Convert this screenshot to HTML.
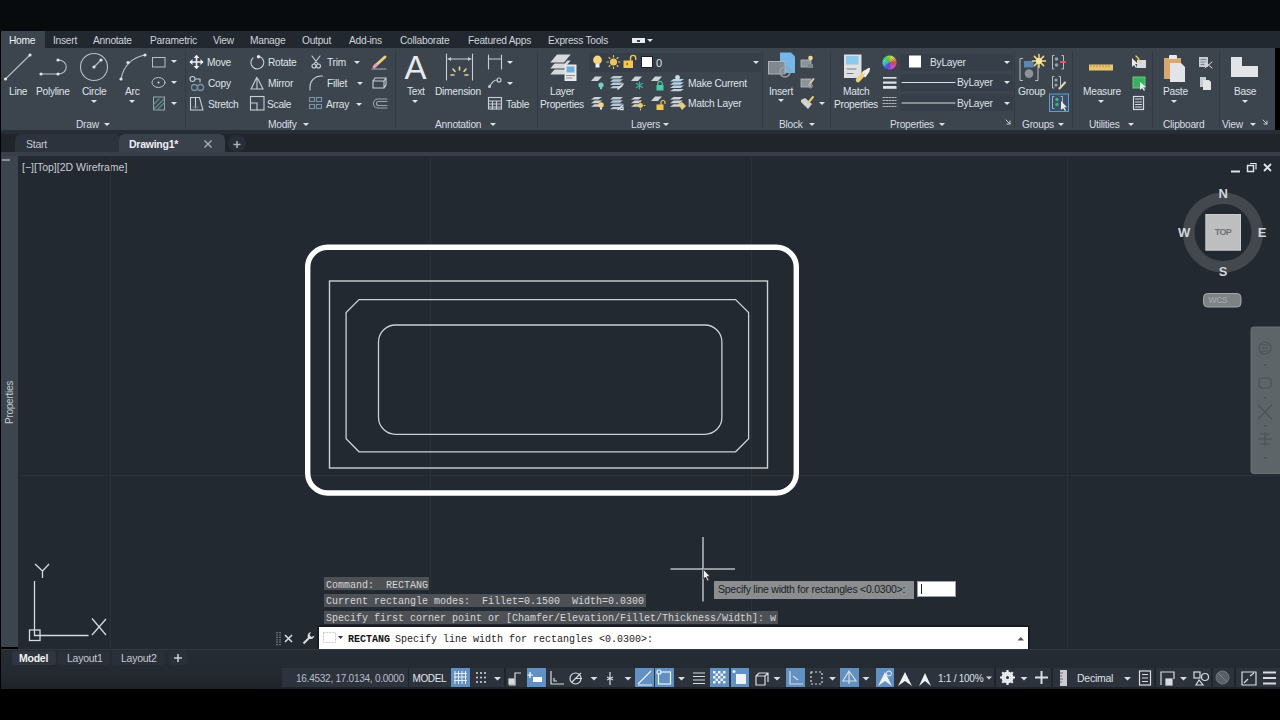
<!DOCTYPE html>
<html><head><meta charset="utf-8">
<style>
*{margin:0;padding:0;box-sizing:border-box}
html,body{width:1280px;height:720px;overflow:hidden;background:#000;font-family:"Liberation Sans",sans-serif;color:#e6e9ee;letter-spacing:-0.25px}
.a{position:absolute;white-space:nowrap}
#tabs{position:absolute;left:1px;top:31px;width:1279px;height:17px;background:#22282f}
.rt{position:absolute;top:0;height:18px;line-height:19.4px;font-size:10.2px;color:#cfd4db;white-space:nowrap}
#ribbon{position:absolute;left:1px;top:48px;width:1274px;height:82px;background:#3c454e}
.sep{position:absolute;top:51px;width:1px;height:77px;background:#323a47}
.pt{position:absolute;top:117.5px;font-size:10.2px;color:#d8dce2;line-height:14px;white-space:nowrap}
.lb{position:absolute;font-size:10.2px;color:#dfe3e8;line-height:12px;margin-top:-5.5px;white-space:nowrap}
.dd{font-size:8px;position:relative;top:-1px;margin-left:3px}
.dr{position:absolute;width:0;height:0;border-left:3px solid transparent;border-right:3px solid transparent;border-top:3px solid #dfe3e8}
#ftabs{position:absolute;left:1px;top:130px;width:1279px;height:25px;background:#20252c}
#vp{position:absolute;left:18px;top:156px;width:1262px;height:493px;background:#222931}
#bottom{position:absolute;left:1px;top:649px;width:1279px;height:40px;background:linear-gradient(#262c34,#242a31 55%,#1f2328)}
svg{position:absolute;left:0;top:0}
</style></head><body>
<div class="a" style="left:0;top:0;width:1280px;height:31px;background:#080b0d"></div>
<div id="tabs">
 <div class="rt" style="left:0;width:44px;height:17px;background:#3c454e"></div>
 <div class="rt" style="left:8px;color:#f0f2f5">Home</div>
 <div class="rt" style="left:52px">Insert</div>
 <div class="rt" style="left:92px">Annotate</div>
 <div class="rt" style="left:149px">Parametric</div>
 <div class="rt" style="left:212px">View</div>
 <div class="rt" style="left:249px">Manage</div>
 <div class="rt" style="left:301px">Output</div>
 <div class="rt" style="left:348px">Add-ins</div>
 <div class="rt" style="left:399px">Collaborate</div>
 <div class="rt" style="left:467px">Featured Apps</div>
 <div class="rt" style="left:547px">Express Tools</div>
 <div class="a" style="left:631px;top:7px;width:13px;height:5px;background:#e8eaee"></div>
 <div class="a" style="left:636px;top:9px;width:3px;height:2px;background:#444"></div>
 <div class="dr" style="left:646px;top:8px"></div>
</div>
<div id="ribbon"></div>
<div class="sep" style="left:185px"></div>
<div class="sep" style="left:395px"></div>
<div class="sep" style="left:537px"></div>
<div class="sep" style="left:762px"></div>
<div class="sep" style="left:830px"></div>
<div class="sep" style="left:1014px"></div>
<div class="sep" style="left:1072px"></div>
<div class="sep" style="left:1152px"></div>
<div class="sep" style="left:1219px"></div>
<div class="pt" style="left:76px">Draw</div><div class="dr" style="left:104px;top:123px"></div>
<div class="pt" style="left:268px">Modify</div><div class="dr" style="left:303px;top:123px"></div>
<div class="pt" style="left:435px">Annotation</div><div class="dr" style="left:490px;top:123px"></div>
<div class="pt" style="left:631px">Layers</div><div class="dr" style="left:663px;top:123px"></div>
<div class="pt" style="left:779px">Block</div><div class="dr" style="left:809px;top:123px"></div>
<div class="pt" style="left:890px">Properties</div><div class="dr" style="left:939px;top:123px"></div>
<div class="pt" style="left:1022px">Groups</div><div class="dr" style="left:1058px;top:123px"></div>
<div class="pt" style="left:1089px">Utilities</div><div class="dr" style="left:1128px;top:123px"></div>
<div class="pt" style="left:1163px">Clipboard</div>
<div class="pt" style="left:1222px">View</div><div class="dr" style="left:1250px;top:123px"></div>
<!-- labels -->
<div class="lb" style="left:9px;top:91px">Line</div>
<div class="lb" style="left:36px;top:91px">Polyline</div>
<div class="lb" style="left:82px;top:91px">Circle</div>
<div class="lb" style="left:125px;top:91px">Arc</div>
<div class="dr" style="left:91px;top:100px"></div>
<div class="dr" style="left:129px;top:100px"></div>
<div class="dr" style="left:171px;top:60px"></div>
<div class="dr" style="left:171px;top:81px"></div>
<div class="dr" style="left:171px;top:102px"></div>
<div class="lb" style="left:207px;top:62px">Move</div>
<div class="lb" style="left:268px;top:62px">Rotate</div>
<div class="lb" style="left:327px;top:62px">Trim</div>
<div class="lb" style="left:208px;top:83px">Copy</div>
<div class="lb" style="left:268px;top:83px">Mirror</div>
<div class="lb" style="left:327px;top:83px">Fillet</div>
<div class="lb" style="left:208px;top:104px">Stretch</div>
<div class="lb" style="left:267px;top:104px">Scale</div>
<div class="lb" style="left:326px;top:104px">Array</div>
<div class="dr" style="left:354px;top:61px"></div>
<div class="dr" style="left:357px;top:82px"></div>
<div class="dr" style="left:356px;top:103px"></div>
<div class="lb" style="left:407px;top:91px">Text</div>
<div class="dr" style="left:412px;top:100px"></div>
<div class="lb" style="left:435px;top:91px">Dimension</div>
<div class="dr" style="left:507px;top:61px"></div>
<div class="dr" style="left:507px;top:82px"></div>
<div class="lb" style="left:506px;top:104px">Table</div>
<div class="lb" style="left:550px;top:91px">Layer</div>
<div class="lb" style="left:540px;top:104px">Properties</div>
<div class="a" style="left:589px;top:53px;width:172px;height:19px;background:#363e49"></div>
<div class="lb" style="left:656px;top:62px;font-size:11px">0</div>
<div class="dr" style="left:753px;top:61px"></div>
<div class="lb" style="left:688px;top:83px">Make Current</div>
<div class="lb" style="left:688px;top:103px">Match Layer</div>
<div class="lb" style="left:769px;top:91px">Insert</div>
<div class="dr" style="left:778px;top:99px"></div>
<div class="dr" style="left:819px;top:102px"></div>
<div class="lb" style="left:843px;top:91px">Match</div>
<div class="lb" style="left:834px;top:104px">Properties</div>
<div class="a" style="left:900px;top:54px;width:113px;height:17px;background:#363e49"></div>
<div class="a" style="left:900px;top:74px;width:113px;height:17px;background:#363e49"></div>
<div class="a" style="left:900px;top:94px;width:113px;height:17px;background:#363e49"></div>
<div class="lb" style="left:930px;top:62px">ByLayer</div>
<div class="lb" style="left:957px;top:82px">ByLayer</div>
<div class="lb" style="left:957px;top:103px">ByLayer</div>
<div class="dr" style="left:1004px;top:61px"></div>
<div class="dr" style="left:1004px;top:81px"></div>
<div class="dr" style="left:1004px;top:102px"></div>
<div class="lb" style="left:1018px;top:91px">Group</div>
<div class="lb" style="left:1083px;top:91px">Measure</div>
<div class="dr" style="left:1098px;top:100px"></div>
<div class="lb" style="left:1163px;top:91px">Paste</div>
<div class="dr" style="left:1171px;top:100px"></div>
<div class="lb" style="left:1234px;top:91px">Base</div>
<div class="dr" style="left:1242px;top:100px"></div>
<div id="ftabs"></div>
<div class="a" style="left:1px;top:130px;width:1279px;height:4px;background:#272d35"></div>
<div class="a" style="left:15px;top:134px;width:107px;height:18px;background:#2d333c;border-radius:7px 7px 0 0"></div>
<div class="a" style="left:119px;top:134px;width:106px;height:19px;background:#39414d;border-radius:6px 6px 0 0"></div>
<div class="a" style="left:228px;top:135px;width:18px;height:17px;background:#272e37;border-radius:9px"></div>
<div class="a" style="left:1px;top:152px;width:1279px;height:4px;background:#383f49"></div>
<div class="a" style="left:26px;top:138px;font-size:10.5px;line-height:12px;color:#c4c9d0">Start</div>
<div class="a" style="left:129px;top:138px;font-size:10.5px;line-height:12px;color:#eef0f3;font-weight:bold">Drawing1*</div>
<svg width="1280" height="720" viewBox="0 0 1280 720" fill="none">
 <path d="M204.5 140.5 L211.5 147.5 M211.5 140.5 L204.5 147.5" stroke="#a9aeb5" stroke-width="1.4"/>
 <path d="M237 141 V148 M233.5 144.5 H240.5" stroke="#aeb4bb" stroke-width="1.5"/>
</svg>
<div id="vp"></div>
<div class="a" style="left:1px;top:156px;width:17px;height:491px;background:#3c454e"></div>
<div class="a" style="left:2px;top:159px;width:8px;height:2px;background:#8a919a"></div>
<div class="a" style="left:-17px;top:396px;width:52px;height:13px;transform:rotate(-90deg);font-size:10px;line-height:13px;color:#c4c9d0;text-align:center">Properties</div>
<div class="a" style="left:22px;top:161px;font-size:10.5px;line-height:12px;color:#c9ced4;letter-spacing:0">[−][Top][2D Wireframe]</div>
<svg width="1280" height="720" viewBox="0 0 1280 720" fill="none">
 <!-- faint grid -->
 <g stroke="#2a3139" stroke-width="1">
  <path d="M110.5 157 V648 M430.5 157 V648 M751.5 157 V648 M1067.5 157 V648 M19 475.5 H1280"/>
 </g>
 <!-- drawing -->
 <rect x="307.7" y="247.2" width="488.6" height="245.8" rx="20" stroke="#ffffff" stroke-width="5.4"/>
 <rect x="329.5" y="281" width="438" height="187" stroke="#cdd0d4" stroke-width="1.4"/>
 <path d="M359 299.6 H735.6 L748.6 312.6 V438.8 L735.6 451.8 H359 L346.1 438.8 V312.6 Z" stroke="#cdd0d4" stroke-width="1.3"/>
 <rect x="378.5" y="325" width="343.4" height="109.3" rx="17" stroke="#cdd0d4" stroke-width="1.3"/>
 <!-- UCS -->
 <g stroke="#d6d9dd" stroke-width="1.3">
  <path d="M34.5 581 V635.5 H88.5"/>
  <rect x="29.5" y="630" width="10.5" height="10.5"/>
  <path d="M35 564 L42.5 571 L49 564 M42.5 571 V578"/>
  <path d="M92 618.5 L106 635 M106 619 L92 635"/>
 </g>
 <!-- crosshair -->
 <path d="M703 537 V601.5 M670.5 569 H735" stroke="#b9bdc2" stroke-width="1.5"/>
 <path d="M703.5 569.5 V579 L705.5 577 L707.5 581 L709 580.2 L707 576.5 H710 Z" fill="#f0f0f0" stroke="#222" stroke-width="0.6"/>
 <!-- viewcube -->
 <circle cx="1223" cy="232.5" r="34.3" stroke="#42484e" stroke-width="11.5"/>
 <rect x="1205.5" y="214" width="35.5" height="36.5" fill="#bdbebf"/>
 <rect x="1206" y="214.5" width="34.5" height="35.5" fill="none" stroke="#cacbcc" stroke-width="1"/>
 <!-- window controls -->
 <path d="M1231 171.5 H1240" stroke="#e0e3e7" stroke-width="2"/>
 <rect x="1247.5" y="165.5" width="6" height="6" stroke="#e0e3e7" stroke-width="1.5"/>
 <path d="M1250 163.5 H1256 V169.5" stroke="#e0e3e7" stroke-width="1.2"/>
 <path d="M1264 164 L1271 171 M1271 164 L1264 171" stroke="#e0e3e7" stroke-width="1.8"/>
 <!-- WCS -->
 <rect x="1203.5" y="293.5" width="37.5" height="13.5" rx="4" fill="#7d8286" stroke="#a2a6aa" stroke-width="1"/>
 <!-- navbar -->
 <rect x="1251" y="327" width="31" height="146.5" rx="2.5" fill="#5e6569" stroke="#6a7175" stroke-width="1"/>
 <g stroke="#4b5256" stroke-width="1.2">
  <circle cx="1265" cy="348" r="6"/>
  <path d="M1262 345 H1268 M1262 348 H1268 M1262 351 H1268"/>
  <rect x="1259" y="378" width="12" height="10" rx="3"/>
  <path d="M1258 405 L1272 419 M1272 405 L1258 419"/>
  <path d="M1258 439 H1272 M1265 432 V446 M1260 434 H1270 M1260 444 H1270"/>
 </g>
 <path d="M1263 364 h4 l-2 2z M1263 397 h4 l-2 2z M1263 425 h4 l-2 2z M1263 457 h4 l-2 2z" fill="#4b5256"/>
</svg>
<div class="a" style="left:1205px;top:226px;width:36px;text-align:center;font-size:9px;line-height:12px;color:#717477;font-weight:bold;letter-spacing:-0.6px">TOP</div>
<div class="a" style="left:1215px;top:186px;width:16px;text-align:center;font-size:13px;line-height:15px;color:#d2d5d9;font-weight:bold">N</div>
<div class="a" style="left:1215px;top:264px;width:16px;text-align:center;font-size:13px;line-height:15px;color:#d2d5d9;font-weight:bold">S</div>
<div class="a" style="left:1175px;top:225px;width:18px;text-align:center;font-size:13px;line-height:15px;color:#d2d5d9;font-weight:bold">W</div>
<div class="a" style="left:1254px;top:225px;width:16px;text-align:center;font-size:13px;line-height:15px;color:#d2d5d9;font-weight:bold">E</div>
<div class="a" style="left:1203px;top:295px;width:30px;text-align:center;font-size:8.5px;line-height:10px;color:#a9adb1">WCS</div>
<!-- command history -->
<div class="a" style="left:324px;top:577px;width:105px;height:13px;background:#4d5156"></div>
<div class="a" style="left:324px;top:594px;width:322px;height:13px;background:#4d5156"></div>
<div class="a" style="left:324px;top:610.5px;width:454px;height:13.5px;background:#4d5156"></div>
<div class="a" style="left:326px;top:578.5px;font-family:'Liberation Mono',monospace;letter-spacing:0;font-size:10px;line-height:13px;color:#d4d6d8;white-space:pre">Command:  RECTANG</div>
<div class="a" style="left:326px;top:595px;font-family:'Liberation Mono',monospace;letter-spacing:0;font-size:10px;line-height:13px;color:#d4d6d8;white-space:pre">Current rectangle modes:  Fillet=0.1500  Width=0.0300</div>
<div class="a" style="left:326px;top:612px;font-family:'Liberation Mono',monospace;letter-spacing:0;font-size:10px;line-height:13px;color:#d4d6d8;white-space:pre">Specify first corner point or [Chamfer/Elevation/Fillet/Thickness/Width]: w</div>
<!-- command input -->
<div class="a" style="left:319px;top:627px;width:709px;height:22px;background:#ffffff;box-shadow:0 0 0 1.5px #15191e"></div>
<div class="a" style="left:348px;top:632.7px;font-family:'Liberation Mono',monospace;letter-spacing:0;font-size:10px;line-height:13px;color:#111;font-weight:bold;white-space:pre">RECTANG</div>
<div class="a" style="left:395px;top:632.7px;font-family:'Liberation Mono',monospace;letter-spacing:0;font-size:10px;line-height:13px;color:#222;white-space:pre">Specify line width for rectangles &lt;0.0300&gt;:</div>
<svg width="1280" height="720" viewBox="0 0 1280 720" fill="none">
 <path d="M277 632 V646 M280 632 V646" stroke="#9aa0a8" stroke-width="1.2" stroke-dasharray="1.2 1.2"/>
 <path d="M285 635 L292 642 M292 635 L285 642" stroke="#d8dce0" stroke-width="1.6"/>
 <path d="M303.5 643.5 L310 637" stroke="#d8dce0" stroke-width="2"/><path d="M308.5 638.5 A4 4 0 0 1 311 632 L309.5 635 L311.5 637 L314.5 635.5 A4 4 0 0 1 308.5 638.5Z" fill="#d8dce0"/>
 <rect x="323.5" y="632.5" width="12" height="10" stroke="#c8ccd0" stroke-width="1" stroke-dasharray="2 1"/>
 <path d="M338 636 h5 l-2.5 3z" fill="#333"/>
 <path d="M1017.5 640.5 h6.5 l-3.25 -3.5z" fill="#505050"/>
</svg>
<!-- tooltip -->
<div class="a" style="left:714px;top:580.5px;width:200px;height:18px;background:#8b8e91"></div>
<div class="a" style="left:718px;top:583px;font-size:10.5px;line-height:12px;color:#1c1f22">Specify line width for rectangles &lt;0.0300&gt;:</div>
<div class="a" style="left:917px;top:580.5px;width:39px;height:16.5px;background:#fff;border:1px solid #9aa0a6"></div>
<div class="a" style="left:921px;top:584px;width:1px;height:10px;background:#222"></div>
<div id="bottom"></div>
<div class="a" style="left:1px;top:649px;width:1279px;height:1px;background:#323943"></div>
<div class="a" style="left:12px;top:651px;width:44px;height:14px;background:#2f3640;border-radius:3px"></div>
<div class="a" style="left:58px;top:651px;width:52px;height:14px;background:#2a3039;border-radius:3px"></div>
<div class="a" style="left:112px;top:651px;width:53px;height:14px;background:#2a3039;border-radius:3px"></div>
<div class="a" style="left:169px;top:651px;width:18px;height:14px;background:#2a3039;border-radius:3px"></div>
<div class="a" style="left:19px;top:652px;font-size:10.5px;line-height:12px;color:#f0f2f4;font-weight:bold">Model</div>
<div class="a" style="left:67px;top:652px;font-size:10.5px;line-height:12px;color:#c4c9d0">Layout1</div>
<div class="a" style="left:121px;top:652px;font-size:10.5px;line-height:12px;color:#c4c9d0">Layout2</div>
<!-- status bar items bg -->
<div class="a" style="left:282px;top:668px;width:998px;height:19px;background:#2c333d"></div>
<div class="a" style="left:296px;top:672.5px;font-size:10px;line-height:12px;color:#b9bec5">16.4532, 17.0134, 0.0000</div>
<div class="a" style="left:412.5px;top:672.5px;font-size:10px;letter-spacing:-0.4px;line-height:12px;color:#e4e7eb">MODEL</div>
<div class="a" style="left:938px;top:672.5px;font-size:10px;line-height:12px;color:#dde0e4">1:1 / 100%</div>
<div class="a" style="left:1077px;top:672px;font-size:10.5px;line-height:12px;color:#dde0e4">Decimal</div>
<svg width="1280" height="720" viewBox="0 0 1280 720" fill="none">
 <!-- dividers -->
 <g fill="#1f252d">
  <rect x="408" y="668" width="1" height="19"/><rect x="504" y="668" width="2" height="19"/>
  <rect x="994" y="668" width="2" height="19"/><rect x="1051" y="668" width="2" height="19"/>
  <rect x="1154" y="668" width="2" height="19"/><rect x="1211" y="668" width="2" height="19"/>
  <rect x="1234" y="668" width="2" height="19"/>
 </g>
 <!-- blue buttons -->
 <g fill="#6191c2">
  <rect x="451" y="668" width="19" height="19"/>
  <rect x="527" y="668" width="19" height="19"/>
  <rect x="635" y="668" width="19" height="19"/>
  <rect x="655" y="668" width="19" height="19"/>
  <rect x="710" y="668" width="19" height="19"/>
  <rect x="731" y="668" width="18" height="19"/>
  <rect x="786" y="668" width="19" height="19"/>
  <rect x="840" y="668" width="19" height="19"/>
  <rect x="876" y="668" width="18" height="19"/>
 </g>
 <g stroke="#e8ecf0" stroke-width="1">
  <!-- grid -->
  <path d="M455 671 V684 M458.5 671 V684 M462 671 V684 M465.5 671 V684 M454 673.5 H467 M454 677 H467 M454 680.5 H467"/>
 </g>
 <g fill="#d8dce0">
  <!-- snap dots -->
  <circle cx="477" cy="673" r="1"/><circle cx="481" cy="673" r="1"/><circle cx="485" cy="673" r="1"/>
  <circle cx="477" cy="677.5" r="1"/><circle cx="481" cy="677.5" r="1"/><circle cx="485" cy="677.5" r="1"/>
  <circle cx="477" cy="682" r="1"/><circle cx="481" cy="682" r="1"/><circle cx="485" cy="682" r="1"/>
  <!-- arrows -->
  <path d="M494 677 h7 l-3.5 3.5z M590.5 677 h7 l-3.5 3.5z M624.5 677 h7 l-3.5 3.5z M678 677 h7 l-3.5 3.5z M773.5 677 h7 l-3.5 3.5z M829 677 h7 l-3.5 3.5z M862.5 677 h7 l-3.5 3.5z M986 676.5 h6 l-3 3z M1020.5 677 h7 l-3.5 3.5z M1124 677 h7 l-3.5 3.5z M1180 677 h7 l-3.5 3.5z"/>
 </g>
 <g stroke="#d8dce0" stroke-width="1.2">
  <path d="M509 685 H515 V673 H521"/>
  <rect x="509" y="679" width="5" height="5" fill="#d8dce0"/>
  <path d="M530 672 V678 M527.5 675 H533" stroke="#fff"/>
  <rect x="533" y="677" width="9" height="5" fill="#fff" stroke="none"/>
  <path d="M551 671 V684 H564 M554 678 V681 H557"/>
  <circle cx="575.5" cy="678.5" r="5.5"/>
  <path d="M572 682 L581 673 M575 678.5 H582"/>
  <path d="M610 672 V685 M607 677 L613 680 M607 680 L613 677"/>
  <path d="M638 684 L651 671 M638 685 H652" stroke="#eef2f5"/>
  <rect x="658.5" y="672" width="12" height="12" stroke="#eef2f5"/>
  <circle cx="659" cy="672" r="2" fill="#6191c2" stroke="#eef2f5"/>
  <path d="M693 673 H705 M693 676.5 H705 M693 680 H705 M693 683.5 H705"/>
  <path d="M756 676 H765 V685 H756 Z M759 673 H768 V682 M756 676 L759 673 M765 676 L768 673"/>
  <path d="M790 671 V684 H803 M793 676 L798 680"/>
  <rect x="811" y="672" width="11" height="12" stroke-dasharray="2 2"/>
  <path d="M849 671 L843 681 H856 Z M849 671 V684"/>
  <path d="M1035 677.5 H1048 M1041.5 671 V684" stroke-width="2"/>
  <rect x="1139.5" y="671" width="11" height="14"/>
  <path d="M1142 674.5 H1148 M1142 678 H1148 M1142 681.5 H1148"/>
  <path d="M1161 685 V672 H1174 V679"/>
  <rect x="1166" y="679" width="6" height="6" fill="#d8dce0"/>
  <rect x="1194" y="672" width="6" height="6"/>
  <circle cx="1205" cy="677" r="3.5"/>
  <path d="M1199 680 L1196 685 H1203 Z"/>
  <path d="M1242 672 H1256 V685 H1242 Z M1244 683 L1248 679 M1250 676 L1254 673"/>
  <path d="M1263 672.5 H1276 M1263 678 H1276 M1263 683.5 H1276" stroke-width="1.8"/>
 </g>
 <g fill="#eef2f5">
  <path d="M878 686 L885 672 L892 686 L885 681 Z"/>
  <path d="M898 686 L905 672 L912 686 L905 681 Z"/>
  <path d="M919 686 L925 673 L931 686 L925 681 Z"/>
 </g>
 <circle cx="889" cy="673.5" r="2.5" stroke="#eef2f5" stroke-width="1"/>
 <!-- gear -->
 <circle cx="1007.5" cy="677.5" r="4.5" stroke="#e8ecf0" stroke-width="3"/>
 <path d="M1007.5 670 V685 M1000 677.5 H1015 M1002.2 672.2 L1012.8 682.8 M1012.8 672.2 L1002.2 682.8" stroke="#e8ecf0" stroke-width="2.2"/>
 <circle cx="1007.5" cy="677.5" r="1.5" fill="#2c333d"/>
 <rect x="1060" y="670" width="7" height="16" fill="#c8ccd0"/>
 <path d="M1060 673 h3 M1060 676 h2 M1060 679 h3 M1060 682 h2" stroke="#555" stroke-width="0.8"/>
 <circle cx="1222.5" cy="677.5" r="6.5" fill="#5a6068" stroke="#6e747c" stroke-width="1"/>
 <path d="M1218 673 L1227 682" stroke="#7a8088" stroke-width="1"/>
 <g><rect x="713.0" y="671.0" width="2.5" height="2.5" fill="#f0f3f6"/><rect x="713.0" y="676.0" width="2.5" height="2.5" fill="#f0f3f6"/><rect x="713.0" y="681.0" width="2.5" height="2.5" fill="#f0f3f6"/><rect x="715.5" y="673.5" width="2.5" height="2.5" fill="#f0f3f6"/><rect x="715.5" y="678.5" width="2.5" height="2.5" fill="#f0f3f6"/><rect x="718.0" y="671.0" width="2.5" height="2.5" fill="#f0f3f6"/><rect x="718.0" y="676.0" width="2.5" height="2.5" fill="#f0f3f6"/><rect x="718.0" y="681.0" width="2.5" height="2.5" fill="#f0f3f6"/><rect x="720.5" y="673.5" width="2.5" height="2.5" fill="#f0f3f6"/><rect x="720.5" y="678.5" width="2.5" height="2.5" fill="#f0f3f6"/><rect x="723.0" y="671.0" width="2.5" height="2.5" fill="#f0f3f6"/><rect x="723.0" y="676.0" width="2.5" height="2.5" fill="#f0f3f6"/><rect x="723.0" y="681.0" width="2.5" height="2.5" fill="#f0f3f6"/></g>
 <rect x="736" y="674" width="10" height="10" fill="#f0f3f6"/>
 <circle cx="734" cy="671.5" r="1.5" fill="#f0f3f6"/>
 <path d="M1090 0"/>
 <path d="M178 654 V662 M174 658 H182" stroke="#c8cdd3" stroke-width="1.6"/>
</svg>
<svg width="1280" height="720" viewBox="0 0 1280 720" fill="none" stroke-linecap="round">
<g stroke="#b9bec4" stroke-width="1.1">
 <!-- Draw -->
 <line x1="5.5" y1="79" x2="30" y2="55"/>
 <path d="M41 74 H58 C69 74 69 60 58 60"/>
 <circle cx="94" cy="67" r="13.5"/>
 <line x1="94" y1="67" x2="101" y2="60"/>
 <path d="M121 79 Q125 59 145 55"/>
 <rect x="152.5" y="57.5" width="12.5" height="9.5" stroke-width="1"/>
 <ellipse cx="158.5" cy="82.5" rx="6.5" ry="5" stroke-width="1"/>
 <rect x="153.5" y="97" width="11" height="13" stroke-width="1" stroke="#9aa6ae"/>
</g>
<g fill="#dfe3e8">
 <circle cx="5.5" cy="79" r="1.6"/><circle cx="30" cy="55" r="1.6"/>
 <circle cx="41" cy="74" r="1.6"/><circle cx="58" cy="74" r="1.6"/><circle cx="58" cy="60" r="1.6"/>
 <circle cx="94" cy="67" r="1.6"/><circle cx="101" cy="60" r="1.6"/>
 <circle cx="121" cy="79" r="1.6"/><circle cx="128" cy="62.5" r="1.6"/><circle cx="145" cy="55" r="1.6"/>
 <circle cx="158.5" cy="82.5" r="1"/>
</g>
<path d="M154 109 L164 99 M154 104 L159 99 M158 109 L164 103" stroke="#5f8f8c" stroke-width="1.2"/>
<!-- Modify -->
<g stroke="#eef0f3" stroke-width="1.6" stroke-linecap="butt">
 <path d="M190 62 H203 M196.5 55.5 V68.5"/>
</g>
<g fill="#eef0f3">
 <path d="M189.5 62 L192.5 59 V65Z M203.5 62 L200.5 59 V65Z M196.5 55 L193.5 58 H199.5Z M196.5 69 L193.5 66 H199.5Z"/>
</g>
<g stroke="#c9cdd3" stroke-width="1.1">
 <circle cx="192.5" cy="79" r="2.5"/>
 <path d="M195.5 79 H200 V82"/>
</g>
<g stroke="#7890a4" stroke-width="1.3">
 <circle cx="194.5" cy="87.5" r="3"/><circle cx="200.5" cy="87.5" r="3"/>
</g>
<g stroke="#c9cdd3" stroke-width="1.1">
 <path d="M190.5 97.5 H199.5 L203 110 H190.5 Z M195.5 97.5 V108"/>
 <path d="M193 107 H198" stroke="#6d8499"/>
 <!-- rotate -->
 <path d="M253 57.8 A6.4 6.4 0 1 0 259.5 56.5"/><circle cx="258.5" cy="56.8" r="1.7" fill="#e6e9ec" stroke="none"/>
 <!-- mirror -->
 <path d="M257 77 L251 89 H257 Z M258 79 L263 89 H258"/>
 <!-- fillet -->
 <path d="M310 90 V87 A11 11 0 0 1 321 76 H322.5"/>
 <!-- scale -->
 <rect x="250.5" y="96.5" width="13.5" height="13.5"/>
 <path d="M250.5 103 H257 V110"/>
 <!-- box -->
 <path d="M373 81 V88 H384 V81 Z M373 81 L375 78 H386 V85 L384 88 M384 81 L386 78"/>
 <!-- offset -->
 <path d="M387 99 H378 A4.5 4.5 0 0 0 378 108 H387 M387 101.5 H378.5 A2 2 0 0 0 378.5 105.5 H387" stroke="#9aa6ae"/>
</g>
<g stroke="#c9cdd3" stroke-width="1.1">
 <path d="M312 56 L318 64 M320 56 L314 64"/>
 <circle cx="314" cy="66" r="2"/><circle cx="318.5" cy="66" r="2"/>
</g>
<g stroke="#7c93a6" stroke-width="1.1">
 <rect x="309.5" y="97.5" width="5" height="4"/><rect x="316.5" y="97.5" width="5" height="4"/>
 <rect x="309.5" y="104.5" width="5" height="4"/><rect x="316.5" y="104.5" width="5" height="4"/>
</g>
<path d="M375 66 L385 57" stroke="#e9cf7c" stroke-width="3"/>
<path d="M374 67 L376 65" stroke="#e0a0b0" stroke-width="3"/>
<path d="M372 69 H386" stroke="#c9cdd3" stroke-width="0.8"/>
<!-- Annotation -->
<text x="415.5" y="79" font-family="Liberation Sans" font-size="33" fill="#e8eaee" text-anchor="middle">A</text>
<g stroke="#c9cdd3" stroke-width="1.1">
 <path d="M446.5 54 V80 M472.5 54 V80 M448 59 H471"/>
 <path d="M488.5 55 V69 M501.5 55 V69 M489 59 H501"/>
 <path d="M490 86 Q493 80 497 80"/>
 <circle cx="499" cy="80" r="2"/>
 <rect x="488.5" y="97.5" width="13" height="11.5"/>
 <path d="M488.5 101 H501.5 M488.5 104 H501.5 M488.5 107 H501.5 M492.5 101 V109 M496.5 101 V109"/>
</g>
<g fill="#c9cdd3"><path d="M448 59 l3 -2 v4z M471 59 l-3 -2 v4z"/><circle cx="489.5" cy="86.5" r="1.5"/></g>
<g stroke="#e8d38a" stroke-width="1.6">
 <path d="M459.5 67 V70 M453 69 L455 71.5 M466 69 L464 71.5 M451 75 H454 M465 75 H468"/>
</g>
<!-- Layers -->
<path d="M549 75 L556.5 66 H572 L564.5 75Z" fill="#d5d8dc" stroke="#3c454e" stroke-width="1.2"/>
<path d="M549 69 L556.5 60 H572 L564.5 69Z" fill="#d5d8dc" stroke="#3c454e" stroke-width="1.2"/>
<path d="M549 63 L556.5 54 H572 L564.5 63Z" fill="#d5d8dc" stroke="#3c454e" stroke-width="1.2"/>
<rect x="564.5" y="64.5" width="12" height="16.5" fill="#e6e8eb"/>
<rect x="566.5" y="66.5" width="8" height="6" fill="#6aaee0"/>
<path d="M566.5 75.5 H574.5 M566.5 78 H572" stroke="#8a7070" stroke-width="0.8"/>
<circle cx="597.5" cy="60" r="4.4" fill="#f2d680"/><rect x="595.5" y="64" width="4" height="3.5" fill="#eceef0"/>
<circle cx="613.5" cy="62" r="3.6" fill="#eec460"/>
<g stroke="#e8c460" stroke-width="1.1"><path d="M613.5 55.5 V57 M613.5 67 V68.5 M607 62 H608.5 M618.5 62 H620 M609 57.5 L610 58.5 M617 65.5 L618 66.5 M618 57.5 L617 58.5 M610 65.5 L609 66.5"/></g>
<rect x="623.5" y="60.5" width="9.5" height="7.5" fill="#f0c850"/>
<path d="M630.5 60.5 V58 A2.6 2.6 0 0 1 635.7 58 V59.5" stroke="#f0c850" stroke-width="1.4" fill="none"/>
<rect x="626.5" y="63" width="1.5" height="2" fill="#8a6a20"/>
<rect x="641.5" y="56.5" width="11" height="11" fill="#fff" stroke="#1d2126" stroke-width="1"/>
<path d="M591 81.0 L595 76.5 H602 L598 81.0Z" fill="#cfd3d7"/>
<circle cx="601" cy="85" r="2.6" fill="#6fd0c8"/><rect x="600" y="87" width="2" height="2.2" fill="#6fd0c8"/>
<path d="M610 88.30000000000001 L613 85.9 H623 L620 88.30000000000001Z" fill="#b9c9d6"/><path d="M610 85.0 L613 82.6 H623 L620 85.0Z" fill="#b9c9d6"/><path d="M610 81.7 L613 79.3 H623 L620 81.7Z" fill="#b9c9d6"/><path d="M610 78.4 L613 76.0 H623 L620 78.4Z" fill="#b9c9d6"/>
<path d="M618 89 L623 84" stroke="#d8e4ee" stroke-width="1.6"/>
<path d="M631 81.0 L635 76.5 H642 L638 81.0Z" fill="#cfd3d7"/>
<path d="M639.5 82 V89 M636.5 83.5 L642.5 87.5 M642.5 83.5 L636.5 87.5" stroke="#3fb0a0" stroke-width="1.2"/>
<path d="M651 81.0 L655 76.5 H662 L658 81.0Z" fill="#cfd3d7"/>
<rect x="656.5" y="85" width="7" height="5.5" fill="#50c8a8"/><path d="M657.8 85 V83.5 A2.2 2.2 0 0 1 662.2 83.5 V85" stroke="#50c8a8" stroke-width="1.2" fill="none"/>
<path d="M670 91.30000000000001 L673.5 88.9 H684 L680.5 91.30000000000001Z" fill="#bcd2e2"/><path d="M670 88.0 L673.5 85.6 H684 L680.5 88.0Z" fill="#bcd2e2"/><path d="M670 84.7 L673.5 82.3 H684 L680.5 84.7Z" fill="#bcd2e2"/><path d="M670 81.4 L673.5 79.0 H684 L680.5 81.4Z" fill="#bcd2e2"/>
<circle cx="677.5" cy="77.5" r="2.4" fill="#c8dcec"/>
<path d="M591 106.8 L594.5 104.2 H602 L598.5 106.8Z" fill="#cfd3d7"/><path d="M591 103.19999999999999 L594.5 100.6 H602 L598.5 103.19999999999999Z" fill="#cfd3d7"/><path d="M591 99.6 L594.5 97.0 H602 L598.5 99.6Z" fill="#cfd3d7"/>
<circle cx="601" cy="105" r="2.7" fill="#f2d680"/><rect x="600" y="107.5" width="2" height="2" fill="#eceef0"/>
<path d="M610 109.30000000000001 L613 106.9 H623 L620 109.30000000000001Z" fill="#b9c9d6"/><path d="M610 106.0 L613 103.6 H623 L620 106.0Z" fill="#b9c9d6"/><path d="M610 102.7 L613 100.3 H623 L620 102.7Z" fill="#b9c9d6"/><path d="M610 99.4 L613 97.0 H623 L620 99.4Z" fill="#b9c9d6"/>
<path d="M618 109.5 L623 105 M620.5 109.5 H623 V107" stroke="#d8e4ee" stroke-width="1.3" fill="none"/>
<path d="M631 106.8 L634.5 104.2 H642 L638.5 106.8Z" fill="#cfd3d7"/><path d="M631 103.19999999999999 L634.5 100.6 H642 L638.5 103.19999999999999Z" fill="#cfd3d7"/><path d="M631 99.6 L634.5 97.0 H642 L638.5 99.6Z" fill="#cfd3d7"/>
<circle cx="640.5" cy="105.5" r="2.4" fill="#e8d070"/><path d="M640.5 101 V102 M640.5 109 V110 M636 105.5 H637 M644 105.5 H645" stroke="#e8d070" stroke-width="1"/>
<path d="M651 101.0 L655 96.5 H662 L658 101.0Z" fill="#cfd3d7"/>
<rect x="656.5" y="104.5" width="7" height="5.5" fill="#f0c850"/><path d="M661 104.5 V102.5 A2 2 0 0 1 665 102.5 V103.5" stroke="#f0c850" stroke-width="1.2" fill="none"/>
<path d="M670 106.8 L673.5 104.2 H683 L679.5 106.8Z" fill="#cfd3d7"/><path d="M670 103.19999999999999 L673.5 100.6 H683 L679.5 103.19999999999999Z" fill="#cfd3d7"/><path d="M670 99.6 L673.5 97.0 H683 L679.5 99.6Z" fill="#cfd3d7"/>
<path d="M678 104 L682 102 L686 106 L682 110 Z" fill="#e8cc80"/>

<!-- Block -->
<path d="M780 52.5 H791 L795 56.5 V73 H780Z" fill="#74b8ea"/>
<rect x="768.5" y="61.5" width="16.5" height="12.5" fill="#858b93" stroke="#b4b9be" stroke-width="1" opacity="0.95"/>
<circle cx="785" cy="72" r="5" fill="none" stroke="#9aa0a7" stroke-width="1.6"/>
<rect x="801" y="60" width="10" height="7" fill="#8d939a" stroke="#b8bdc2" stroke-width="0.8"/><circle cx="810.5" cy="58" r="2.3" fill="#f0dc90"/><rect x="808" y="64" width="5" height="4" fill="#7f868d"/>
<rect x="801" y="79" width="10" height="8" fill="#8d939a" stroke="#b8bdc2" stroke-width="0.8"/><path d="M809 85 L813.5 79" stroke="#e0c8a0" stroke-width="2"/><circle cx="810.5" cy="86" r="2" fill="none" stroke="#8a9aa0" stroke-width="1"/>
<path d="M801 100 L805 98 L812 104 L808 109 L801 102Z" fill="#d0d3d6"/><path d="M808 103 L813 97" stroke="#e8cc80" stroke-width="2"/>
<!-- Properties -->
<rect x="844" y="54.5" width="17.5" height="23.5" fill="#dde1e4"/>
<rect x="846" y="56" width="12.5" height="8.5" fill="#90c8ec"/>
<path d="M847 69 H856 M847 73.5 H853" stroke="#6a6060" stroke-width="0.8"/>
<path d="M858 80 L864.5 73" stroke="#ecd080" stroke-width="4.5"/>
<path d="M863.5 72.5 L869 69 M865 76 L868.5 71" stroke="#f0f0f0" stroke-width="2.2"/>
<g><path d="M889.5 62.5 L896.50 62.50 A7 7 0 0 1 896.25 64.37Z" fill="#e54c5f"/><path d="M889.5 62.5 L896.26 64.31 A7 7 0 0 1 895.53 66.05Z" fill="#e54c85"/><path d="M889.5 62.5 L895.56 66.00 A7 7 0 0 1 894.41 67.49Z" fill="#e54cac"/><path d="M889.5 62.5 L894.45 67.45 A7 7 0 0 1 892.95 68.59Z" fill="#e54cd2"/><path d="M889.5 62.5 L893.00 68.56 A7 7 0 0 1 891.25 69.28Z" fill="#d24ce5"/><path d="M889.5 62.5 L891.31 69.26 A7 7 0 0 1 889.44 69.50Z" fill="#ac4ce5"/><path d="M889.5 62.5 L889.50 69.50 A7 7 0 0 1 887.63 69.25Z" fill="#854ce5"/><path d="M889.5 62.5 L887.69 69.26 A7 7 0 0 1 885.95 68.53Z" fill="#5f4ce5"/><path d="M889.5 62.5 L886.00 68.56 A7 7 0 0 1 884.51 67.41Z" fill="#4c5fe5"/><path d="M889.5 62.5 L884.55 67.45 A7 7 0 0 1 883.41 65.95Z" fill="#4c85e5"/><path d="M889.5 62.5 L883.44 66.00 A7 7 0 0 1 882.72 64.25Z" fill="#4cace5"/><path d="M889.5 62.5 L882.74 64.31 A7 7 0 0 1 882.50 62.44Z" fill="#4cd2e5"/><path d="M889.5 62.5 L882.50 62.50 A7 7 0 0 1 882.75 60.63Z" fill="#4ce5d2"/><path d="M889.5 62.5 L882.74 60.69 A7 7 0 0 1 883.47 58.95Z" fill="#4ce5ac"/><path d="M889.5 62.5 L883.44 59.00 A7 7 0 0 1 884.59 57.51Z" fill="#4ce585"/><path d="M889.5 62.5 L884.55 57.55 A7 7 0 0 1 886.05 56.41Z" fill="#4ce55f"/><path d="M889.5 62.5 L886.00 56.44 A7 7 0 0 1 887.75 55.72Z" fill="#5fe54c"/><path d="M889.5 62.5 L887.69 55.74 A7 7 0 0 1 889.56 55.50Z" fill="#85e54c"/><path d="M889.5 62.5 L889.50 55.50 A7 7 0 0 1 891.37 55.75Z" fill="#ace54c"/><path d="M889.5 62.5 L891.31 55.74 A7 7 0 0 1 893.05 56.47Z" fill="#d2e54c"/><path d="M889.5 62.5 L893.00 56.44 A7 7 0 0 1 894.49 57.59Z" fill="#e5d24c"/><path d="M889.5 62.5 L894.45 57.55 A7 7 0 0 1 895.59 59.05Z" fill="#e5ac4c"/><path d="M889.5 62.5 L895.56 59.00 A7 7 0 0 1 896.28 60.75Z" fill="#e5854c"/><path d="M889.5 62.5 L896.26 60.69 A7 7 0 0 1 896.50 62.56Z" fill="#e55f4c"/></g>
<rect x="883" y="77" width="13.5" height="1.6" fill="#e0e3e8"/><rect x="883" y="81.5" width="13.5" height="2.2" fill="#e0e3e8"/><rect x="883" y="86" width="13.5" height="2.8" fill="#e0e3e8"/>
<path d="M883 97.5 H896 M883 100.5 H896 M883 103.5 H896 M883 106.5 H896" stroke="#b0b5bc" stroke-dasharray="2 1"/>
<rect x="909" y="55.5" width="12" height="12" fill="#fff"/>
<path d="M902 82.5 H955 M902 103 H955" stroke="#d8dce2" stroke-width="1"/>
<!-- Groups -->
<path d="M1022.5 58.5 H1020 V80.5 H1022.5 M1035.5 58.5 H1038 V80.5 H1035.5" stroke="#b9bec4" stroke-width="1"/>
<rect x="1024" y="61" width="9.5" height="6.5" fill="#5d86b0"/>
<circle cx="1029" cy="73.6" r="4.3" fill="#8d9298"/>
<path d="M1039 54.5 V67.5 M1032.5 61 H1045.5 M1034.4 56.4 L1043.6 65.6 M1043.6 56.4 L1034.4 65.6" stroke="#f2d680" stroke-width="1.5"/>
<circle cx="1039" cy="61" r="3" fill="#f8e8a8"/>
<g stroke="#b9bec4" stroke-width="1"><path d="M1054 55.5 H1052.5 V69 H1054 M1062 55.5 H1063.5 V69 H1062"/><path d="M1054 76.5 H1052.5 V88 H1054 M1059 76.5 H1060.5 V88 H1059"/></g>
<circle cx="1056.5" cy="59" r="1.8" fill="#8aa0b8"/><circle cx="1056.5" cy="65" r="1.8" fill="#8aa0b8"/><path d="M1061 62 L1065 62" stroke="#e05570" stroke-width="2.2"/>
<circle cx="1056" cy="80" r="1.6" fill="#9aa0a7"/><circle cx="1056" cy="85" r="1.6" fill="#9aa0a7"/><path d="M1059.5 88.5 L1065 82.5" stroke="#e8d8b0" stroke-width="2"/>
<rect x="1049.5" y="94" width="19" height="17.5" stroke="#5aa0d0" stroke-width="1" fill="#3a5068"/>
<path d="M1054 96.5 H1052.5 V108.5 H1054 M1061 96.5 H1062.5 V108.5 H1061" stroke="#aab0b6" stroke-width="1"/>
<circle cx="1057" cy="99.5" r="1.7" fill="#40b080"/><circle cx="1057" cy="104.5" r="1.7" fill="#40b080"/>
<path d="M1061 101 V110 L1063 108 L1065 111 L1066 110.3 L1064.2 107.3 H1067Z" fill="#e8eaee"/>
<!-- Utilities -->
<rect x="1089" y="64.5" width="24" height="6" fill="#e8c870"/>
<path d="M1091 64.5 V67 M1094 64.5 V67 M1097 64.5 V67 M1100 64.5 V67 M1103 64.5 V67 M1106 64.5 V67 M1109 64.5 V67" stroke="#a08040" stroke-width="0.8"/>
<rect x="1137" y="60" width="9" height="8" fill="#d8dce2"/>
<path d="M1132 58 V67 L1134 65 L1136 68 L1137 67 L1135 64 H1138Z" fill="#e8eaee"/>
<path d="M1136 56 L1139 59 L1138 60 L1141 63" stroke="#f2d36b" stroke-width="1.2"/>
<rect x="1133" y="77" width="12" height="11" fill="#3ab060" stroke="#60d080" stroke-width="1"/>
<path d="M1140 82 V90 L1142 88 L1144 91 L1145 90 L1143 87 H1146Z" fill="#e8eaee"/>
<rect x="1133.5" y="96.5" width="10" height="13" stroke="#d8dce2" stroke-width="1.2"/>
<path d="M1135.5 99 H1141.5 M1135.5 102 H1141.5 M1135.5 104.5 H1141.5 M1135.5 107 H1141.5" stroke="#d8dce2" stroke-width="1"/>
<!-- Clipboard -->
<rect x="1164" y="58" width="17" height="21" fill="#d8a870"/>
<rect x="1169" y="55" width="8" height="4" rx="1" fill="#e8eaee"/>
<path d="M1170 63 H1181 L1185 67 V82 H1170Z" fill="#e2e4e8"/>
<path d="M1199 57 H1208 V67 H1199Z" fill="#c8ccd2"/>
<path d="M1201 59.5 H1206 M1201 62 H1206 M1201 64.5 H1204" stroke="#6a7078" stroke-width="0.8"/>
<path d="M1205 62 L1212 68 M1212 62 L1205 68" stroke="#d8dce2" stroke-width="1"/>
<path d="M1200 77 H1206 V87 H1200Z" fill="#c8ccd2"/>
<path d="M1203 80 H1209 L1211 82 V90 H1203Z" fill="#e2e4e8"/>
<!-- View/Base -->
<path d="M1231 57 H1242 V66 H1258 V77 H1231Z" fill="#e2e4e8"/>
<!-- launchers -->
<path d="M1006 120 L1010 124 M1010 121 V124 H1007" stroke="#c9cdd3" stroke-width="1"/>
<path d="M1263 120 L1267 124 M1267 121 V124 H1264" stroke="#c9cdd3" stroke-width="1"/>
</svg>
</body></html>
